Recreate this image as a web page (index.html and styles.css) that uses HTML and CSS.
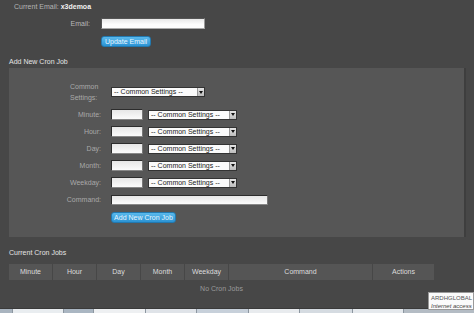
FILE: index.html
```html
<!DOCTYPE html>
<html>
<head>
<meta charset="utf-8">
<link rel="stylesheet" href="styles.css">
</head>
<body>
<div class="page">
  <main class="main">
    <section class="email-section">
      <div class="current-email"><span class="muted">Current Email:</span> <b class="user">x3demoa</b></div>
      <div class="email-form">
        <label class="label">Email:</label>
        <div class="input email-input"></div>
        <div></div>
        <button class="btn btn-update">Update Email</button>
      </div>
    </section>

    <h2 class="heading heading-add">Add New Cron Job</h2>
    <section class="panel">
      <label class="label label-wrap">Common Settings:</label>
      <div class="controls">
        <div class="select select-common"><span class="select-text">-- Common Settings --</span><span class="select-arrow"><svg width="4" height="3" viewBox="0 0 4 3"><path d="M0 0H4L2 3Z" fill="#111"/></svg></span></div>
      </div>

      <label class="label">Minute:</label>
      <div class="controls"><div class="input small-input"></div><div class="select"><span class="select-text">-- Common Settings --</span><span class="select-arrow"><svg width="4" height="3" viewBox="0 0 4 3"><path d="M0 0H4L2 3Z" fill="#111"/></svg></span></div></div>

      <label class="label">Hour:</label>
      <div class="controls"><div class="input small-input"></div><div class="select"><span class="select-text">-- Common Settings --</span><span class="select-arrow"><svg width="4" height="3" viewBox="0 0 4 3"><path d="M0 0H4L2 3Z" fill="#111"/></svg></span></div></div>

      <label class="label">Day:</label>
      <div class="controls"><div class="input small-input"></div><div class="select"><span class="select-text">-- Common Settings --</span><span class="select-arrow"><svg width="4" height="3" viewBox="0 0 4 3"><path d="M0 0H4L2 3Z" fill="#111"/></svg></span></div></div>

      <label class="label">Month:</label>
      <div class="controls"><div class="input small-input"></div><div class="select"><span class="select-text">-- Common Settings --</span><span class="select-arrow"><svg width="4" height="3" viewBox="0 0 4 3"><path d="M0 0H4L2 3Z" fill="#111"/></svg></span></div></div>

      <label class="label">Weekday:</label>
      <div class="controls"><div class="input small-input"></div><div class="select"><span class="select-text">-- Common Settings --</span><span class="select-arrow"><svg width="4" height="3" viewBox="0 0 4 3"><path d="M0 0H4L2 3Z" fill="#111"/></svg></span></div></div>

      <label class="label">Command:</label>
      <div class="controls"><div class="input command-input"></div></div>

      <div></div>
      <div class="controls button-row"><button class="btn btn-add">Add New Cron Job</button></div>
    </section>

    <h2 class="heading heading-current">Current Cron Jobs</h2>
    <table class="jobs">
      <thead>
        <tr>
          <th class="c-min">Minute</th>
          <th class="c-min">Hour</th>
          <th class="c-min">Day</th>
          <th class="c-min">Month</th>
          <th class="c-min">Weekday</th>
          <th class="c-cmd">Command</th>
          <th class="c-act">Actions</th>
        </tr>
      </thead>
      <tbody>
        <tr><td colspan="7" class="empty">No Cron Jobs</td></tr>
      </tbody>
    </table>
  </main>
  <footer class="taskbar">
    <span class="seg s1"></span>
    <span class="seg s2"></span>
    <span class="seg s3"></span>
    <span class="seg s4"></span>
    <span class="seg s5"></span>
    <span class="seg s6"></span>
    <span class="seg s7"></span>
    <span class="seg s8"></span>
    <span class="seg s9"></span>
    <span class="seg s10"></span>
  </footer>
  <div class="tooltip"><div class="tip-title">ARDHGLOBAL</div><div class="tip-sub">Internet access</div></div>
</div>
</body>
</html>
```

FILE: styles.css
```css
* { box-sizing: border-box; }
html, body { margin: 0; padding: 0; }
body {
  background: #474747;
  font-family: "Liberation Sans", Arial, sans-serif;
  font-size: 7px;
  color: #ddd;
}
.page {
  position: relative;
  height: 313px;
  display: flex;
  flex-direction: column;
  overflow: hidden;
}
.main { flex: 1; }

.email-section { padding: 2px 0 0 14px; }
.current-email { line-height: 10px; height: 10px; }
.muted { color: #b4b4b4; }
.user { color: #f2f2f2; font-weight: bold; }

.email-form {
  display: grid;
  grid-template-columns: 76px 104px;
  column-gap: 11px;
  row-gap: 7px;
  margin-top: 6px;
  align-items: center;
}
.label {
  color: #a9a9a9;
  text-align: right;
  line-height: 11px;
  justify-self: end;
}
.email-form .label { color: #b8b8b8; }

.input {
  height: 11px;
  background: linear-gradient(#e6e6e6, #fbfbfb);
  border: 1px solid #2c2c2c;
  border-right-color: #777;
  border-bottom-color: #888;
}
.email-input { width: 104px; border-color: #555 #999 #aaa #555; background: linear-gradient(#e8e8e8, #fdfdfd 60%); }
.small-input { width: 32px; }
.command-input { width: 157px; height: 10px; }

.btn {
  font-family: "Liberation Sans", Arial, sans-serif;
  font-size: 7px;
  color: #e8f6ff;
  height: 11px;
  line-height: 9px;
  padding: 0;
  border: 1px solid #2279b0;
  border-radius: 3px;
  background: linear-gradient(#5ab9ec, #2b93d4);
  justify-self: start;
}
.btn-update { width: 50px; }
.btn-add { width: 65px; }

.heading {
  margin: 0;
  font-size: 7px;
  font-weight: normal;
  line-height: 10px;
  color: #e4e4e4;
  padding-left: 9px;
}
.heading-add { margin-top: 10px; margin-bottom: 1px; }
.heading-current { margin-top: 11px; }

.panel {
  margin: 0 8px 0 9px;
  background: #565656;
  border-right: 2px solid #3e3e3e;
  padding: 13px 0 14px 0;
  display: grid;
  grid-template-columns: 92px auto;
  column-gap: 10px;
  row-gap: 6px;
  align-items: center;
}
.label-wrap { width: 31px; text-align: left; }
.controls { display: flex; gap: 5px; align-items: center; }
.button-row { margin-top: 1px; }

.select {
  width: 89px;
  height: 10px;
  background: #fbfbfb;
  border: 1px solid #333;
  display: flex;
  align-items: center;
  color: #222;
}
.select-common { width: 94px; }
.select-text { flex: 1; padding-left: 2px; line-height: 8px; white-space: nowrap; overflow: hidden; }
.select-arrow {
  width: 7px;
  height: 8px;
  background: linear-gradient(#e4e4e4, #bdbdbd);
  border-left: 1px solid #999;
  display: flex;
  align-items: center;
  justify-content: center;
}
.select-arrow svg { display: block; }

.jobs {
  margin: 6px 0 0 8px;
  border-collapse: separate;
  border-spacing: 1px 0;
  table-layout: fixed;
  width: 427px;
}
.jobs th {
  background: #555;
  color: #dcdcdc;
  font-weight: normal;
  height: 16px;
  padding: 0;
  line-height: 16px;
}
.c-min { width: 43px; }
.c-cmd { width: 143px; }
.c-act { width: 61px; }
.jobs td.empty {
  text-align: center;
  color: #9a9a9a;
  height: 17px;
  line-height: 17px;
  padding: 0;
}

.taskbar {
  height: 5px;
  display: flex;
  border-top: 1px solid #3a3a3a;
  background: #8c96a0;
  gap: 1px;
}
.seg { display: block; height: 100%; }
.s1 { width: 12px; background: #a9b4bf; }
.s2 { width: 50px; background: #e9edf0; }
.s3 { width: 29px; background: #aab6c2; }
.s4 { width: 51px; background: #eef0f2; }
.s5 { width: 50px; background: #dfe3e8; }
.s6 { width: 51px; background: #c7d0da; }
.s7 { width: 50px; background: #e8ebee; }
.s8 { width: 52px; background: #d5dbe1; }
.s9 { width: 50px; background: #e5e9ed; }
.s10 { flex: 1; background: #b4bcc4; }

.tooltip {
  position: absolute;
  right: 0;
  bottom: 3px;
  width: 46px;
  height: 18px;
  background: #fbfbfb;
  border: 1px solid #9a9a9a;
  padding: 1px 0 0 2px;
  font-size: 6px;
  line-height: 8px;
  white-space: nowrap;
}
.tip-title { color: #555; }
.tip-sub { color: #444; font-style: italic; }
```
